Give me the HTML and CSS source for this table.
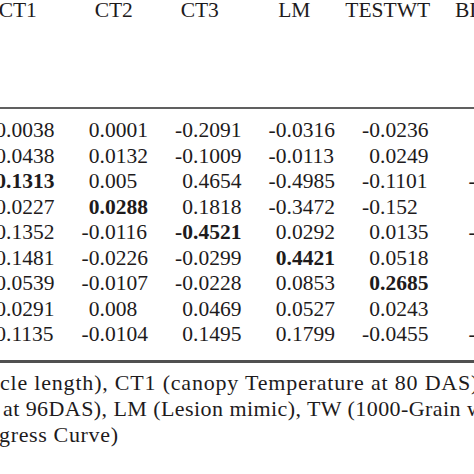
FILE: index.html
```html
<!DOCTYPE html>
<html lang="en">
<head>
    <meta charset="UTF-8">
    <meta name="viewport" content="width=device-width, initial-scale=1.0">
    <title>Correlation table</title>
    <link rel="stylesheet" href="styles.css">
</head>
<body>

    <div class="page">
        <!-- Correlation table (cropped view of a wider table) -->
        <table class="corr">
            <colgroup>
                <col class="c">
                <col class="c">
                <col class="c">
                <col class="c">
                <col class="c">
                <col class="c-last">
            </colgroup>
            <thead>
                <tr>
                    <th>CT1</th>
                    <th>CT2</th>
                    <th>CT3</th>
                    <th>LM</th>
                    <th>TESTWT</th>
                    <th class="last">BIOMASS</th>
                </tr>
            </thead>
            <tbody id="rows"></tbody>
        </table>

        <!-- Footnote under the table -->
        <div class="caption">
            <div class="line l1">cle length), CT1 (canopy Temperature at 80 DAS), CT2</div>
            <div class="line l2">at 96DAS), LM (Lesion mimic), TW (1000-Grain weight)</div>
            <div class="line l3">gress Curve)</div>
        </div>
    </div>

    <script>
        // values per row; a leading * marks the bold (diagonal) entry
        const data = [
            ['0.0038', '0.0001', '-0.2091', '-0.0316', '-0.0236', '0.0412'],
            ['0.0438', '0.0132', '-0.1009', '-0.0113', '0.0249', '0.0377'],
            ['*0.1313', '0.005', '0.4654', '-0.4985', '-0.1101', '-0.2210'],
            ['0.0227', '*0.0288', '0.1818', '-0.3472', '-0.152', '0.0915'],
            ['0.1352', '-0.0116', '*-0.4521', '0.0292', '0.0135', '-0.1043'],
            ['0.1481', '-0.0226', '-0.0299', '*0.4421', '0.0518', '0.0720'],
            ['0.0539', '-0.0107', '-0.0228', '0.0853', '*0.2685', '0.0468'],
            ['0.0291', '0.008', '0.0469', '0.0527', '0.0243', '*0.3310'],
            ['0.1135', '-0.0104', '0.1495', '0.1799', '-0.0455', '-0.0871']
        ];

        const body = document.getElementById('rows');
        data.forEach(function(row) {
            const tr = document.createElement('tr');
            row.forEach(function(v, i) {
                const td = document.createElement('td');
                let text = v;
                if (text[0] === '*') {
                    td.className = 'bold';
                    text = text.slice(1);
                }
                const dot = text.indexOf('.');
                // split so the numbers line up on the decimal point
                td.innerHTML = '<span class="int">' + text.slice(0, dot) + '</span>' +
                               '<span class="frac">' + text.slice(dot) + '</span>';
                if (i === row.length - 1) td.classList.add('last');
                tr.appendChild(td);
            });
            body.appendChild(tr);
        });
    </script>

</body>
</html>
```

FILE: styles.css
```css
/* General page */
body {
    margin: 0;
    background: #fff;
    color: #1e1b1c;
    font-family: 'Liberation Serif', 'Times New Roman', serif;
    overflow: hidden;
}

.page {
    width: 474px;
    height: 474px;
    overflow: hidden;
}

/* Table */
.corr {
    border-collapse: separate;
    border-spacing: 0;
    table-layout: fixed;
    width: 587.5px;
    margin-left: -31px;
    margin-top: -2px;
    font-size: 21.5px;
}

.corr col.c {
    width: 93.5px;
}

.corr col.c-last {
    width: 120px;
}

.corr th {
    font-weight: normal;
    text-align: center;
    vertical-align: top;
    line-height: 24px;
    padding: 0 0 85px 0;
    border-bottom: 2px solid #606060;
    white-space: nowrap;
}

/* small nudges so headers sit where the original typesetting put them */
.corr th:nth-child(1) { padding-left: 4px; }
.corr th:nth-child(2) { padding-left: 9px; }
.corr th:nth-child(3) { padding-right: 6px; }
.corr th:nth-child(4) { padding-right: 4px; }
.corr th:nth-child(5) { padding-right: 4px; }

.corr th.last {
    text-align: left;
    padding-left: 18.5px;
}

.corr td {
    padding: 0;
    line-height: 25.5px;
    white-space: nowrap;
}

.corr tbody tr:first-child td {
    padding-top: 9px;
}

.corr tbody tr:last-child td {
    padding-bottom: 12px;
    border-bottom: 3px solid #505050;
}

.corr td.bold {
    font-weight: bold;
}

/* decimal alignment */
.int {
    display: inline-block;
    width: 37px;
    text-align: right;
}

.last .int {
    width: 50px;
}

/* Footnote */
.caption {
    margin-top: 7.5px;
    font-size: 22px;
    line-height: 26px;
    letter-spacing: 0.65px;
}

.caption .line {
    white-space: nowrap;
}

.caption .l1 {
    letter-spacing: 0.8px;
}

.caption .l2 {
    padding-left: 3px;
    letter-spacing: 0.43px;
}

.caption .l3 {
    margin-left: -1px;
}
```
